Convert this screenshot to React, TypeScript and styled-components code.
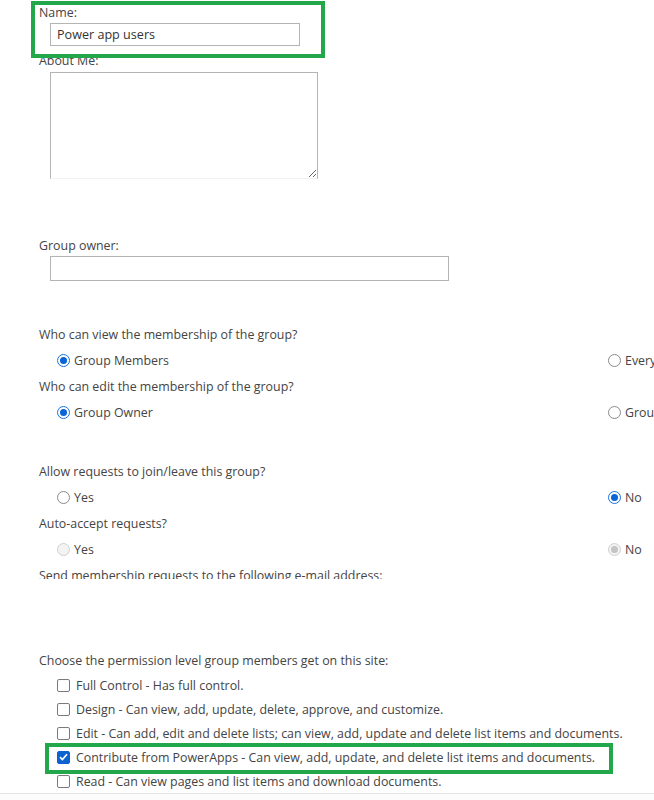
import React from "react";
import styled, { createGlobalStyle } from "styled-components";

const Global = createGlobalStyle`
  html, body {
    margin: 0;
    padding: 0;
    background: #ffffff;
    overflow: hidden;
  }
  body {
    font-family: "Open Sans", "Noto Sans", sans-serif;
    font-size: 12.4px;
    color: #444444;
  }
`;

const Page = styled.div`
  position: relative;
  width: 654px;
  height: 800px;
  padding: 5px 0 0 39px;
  box-sizing: border-box;
  overflow: hidden;
`;

const Label = styled.div<{ $top?: number }>`
  line-height: 16px;
  height: 16px;
  margin-top: ${(p) => p.$top ?? 0}px;
  white-space: nowrap;
`;

const TextInput = styled.input<{ $w: number; $h: number }>`
  display: block;
  box-sizing: border-box;
  margin: 2px 0 0 11px;
  width: ${(p) => p.$w}px;
  height: ${(p) => p.$h}px;
  border: 1px solid #b4b4b4;
  padding: 0 6px;
  font-family: inherit;
  font-size: 12.6px;
  color: #333333;
  outline: none;
  background: #fff;
`;

const TextArea = styled.textarea`
  display: block;
  box-sizing: border-box;
  margin: 3px 0 0 11px;
  width: 268px;
  height: 107px;
  border: 1px solid #b4b4b4;
  border-bottom-color: #f2f2f2;
  resize: both;
  font-family: inherit;
  outline: none;
`;

const Question = styled.div<{ $top?: number }>`
  box-sizing: border-box;
  height: 26px;
  line-height: 26px;
  padding-top: 1px;
  margin-top: ${(p) => p.$top ?? 0}px;
  white-space: nowrap;
`;

const ClippedQuestion = styled(Question)`
  height: 17px;
  overflow: hidden;
`;

const OptionRow = styled.div`
  display: grid;
  grid-template-columns: 551px 200px;
  height: 26px;
  padding-left: 18px;
  align-items: center;
  white-space: nowrap;
`;

const Option = styled.label<{ $disabled?: boolean }>`
  display: flex;
  align-items: center;
  gap: 4px;
  color: #444444;
`;

const Radio = styled.span<{ $checked?: boolean; $disabled?: boolean }>`
  box-sizing: border-box;
  width: 13px;
  height: 13px;
  border-radius: 50%;
  flex: none;
  display: flex;
  align-items: center;
  justify-content: center;
  border: 1px solid
    ${(p) =>
      p.$disabled ? "#d0d0d0" : p.$checked ? "#1a73d9" : "#8a8a8a"};
  background: ${(p) => (p.$disabled ? "#f3f3f3" : "#ffffff")};
  &::after {
    content: "";
    display: ${(p) => (p.$checked ? "block" : "none")};
    width: 7px;
    height: 7px;
    border-radius: 50%;
    background: ${(p) => (p.$disabled ? "#c4c4c4" : "#0a64d6")};
  }
`;

const CheckRow = styled.label`
  display: flex;
  align-items: center;
  gap: 6px;
  height: 24px;
  padding-left: 18px;
  white-space: nowrap;
  color: #444444;
`;

const Box = styled.span<{ $checked?: boolean }>`
  box-sizing: border-box;
  flex: none;
  width: 13px;
  height: 13px;
  border-radius: 2px;
  border: 1px solid ${(p) => (p.$checked ? "#0b63d1" : "#7a7a7a")};
  background: ${(p) => (p.$checked ? "#0b63d1" : "#ffffff")};
  display: flex;
  align-items: center;
  justify-content: center;
`;

const Highlight = styled.div<{ $x: number; $y: number; $w: number; $h: number }>`
  position: absolute;
  left: ${(p) => p.$x}px;
  top: ${(p) => p.$y}px;
  width: ${(p) => p.$w}px;
  height: ${(p) => p.$h}px;
  box-sizing: border-box;
  border: 4px solid #22a84a;
  pointer-events: none;
`;

const BottomRule = styled.div`
  position: absolute;
  left: 0;
  right: 0;
  top: 793px;
  height: 7px;
  border-top: 1px solid #e4e4e4;
  background: #fcfcfc;
`;

const Check = () => (
  <svg width="9" height="8" viewBox="0 0 9 8">
    <path d="M1 4.2 L3.4 6.5 L8 1.3" fill="none" stroke="#fff" strokeWidth="1.7" />
  </svg>
);

const RadioOpt = ({
  label,
  checked,
  disabled,
}: {
  label: string;
  checked?: boolean;
  disabled?: boolean;
}) => (
  <Option $disabled={disabled}>
    <Radio $checked={checked} $disabled={disabled} />
    {label}
  </Option>
);

const perms = [
  { t: "Full Control - Has full control.", c: false },
  { t: "Design - Can view, add, update, delete, approve, and customize.", c: false },
  {
    t: "Edit - Can add, edit and delete lists; can view, add, update and delete list items and documents.",
    c: false,
  },
  {
    t: "Contribute from PowerApps - Can view, add, update, and delete list items and documents.",
    c: true,
  },
  { t: "Read - Can view pages and list items and download documents.", c: false },
];

export default function App() {
  return (
    <>
      <Global />
      <Page>
        <Label>Name:</Label>
        <TextInput $w={250} $h={23} defaultValue="Power app users" />
        <Label $top={7}>About Me:</Label>
        <TextArea />
        <Label $top={59}>Group owner:</Label>
        <TextInput $w={399} $h={25} />

        <Question $top={40}>Who can view the membership of the group?</Question>
        <OptionRow>
          <RadioOpt label="Group Members" checked />
          <RadioOpt label="Everyone" />
        </OptionRow>
        <Question>Who can edit the membership of the group?</Question>
        <OptionRow>
          <RadioOpt label="Group Owner" checked />
          <RadioOpt label="Group Members" />
        </OptionRow>

        <Question $top={33}>Allow requests to join/leave this group?</Question>
        <OptionRow>
          <RadioOpt label="Yes" />
          <RadioOpt label="No" checked />
        </OptionRow>
        <Question>Auto-accept requests?</Question>
        <OptionRow>
          <RadioOpt label="Yes" disabled />
          <RadioOpt label="No" checked disabled />
        </OptionRow>
        <ClippedQuestion>Send membership requests to the following e-mail address:</ClippedQuestion>

        <Question $top={68}>Choose the permission level group members get on this site:</Question>
        {perms.map((p) => (
          <CheckRow key={p.t}>
            <Box $checked={p.c}>{p.c && <Check />}</Box>
            {p.t}
          </CheckRow>
        ))}

        <Highlight $x={31} $y={1} $w={294} $h={57} />
        <Highlight $x={45} $y={743} $w={568} $h={31} />
        <BottomRule />
      </Page>
    </>
  );
}
